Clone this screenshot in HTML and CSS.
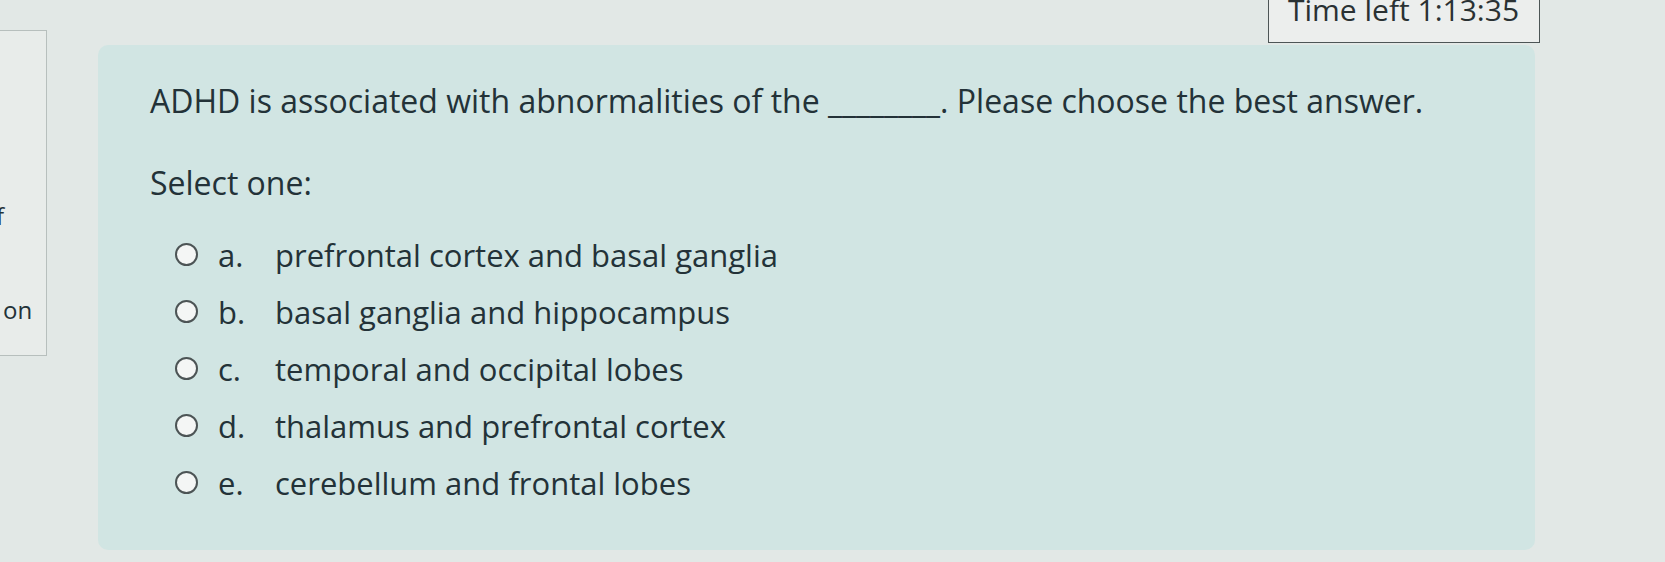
FILE: index.html
```html
<!DOCTYPE html>
<html lang="en">
<head>
    <meta charset="UTF-8">
    <meta name="viewport" content="width=device-width, initial-scale=1.0">
    <title>Quiz</title>
    <link rel="stylesheet" href="styles.css">
</head>
<body>
    <div class="page">
        <div class="sidebar">
            <span class="side-f">f</span>
            <span class="side-on">on</span>
        </div>
        <div class="main">
            <div class="timer-row">
                <div class="timer">Time left 1:13:35</div>
            </div>
            <div class="question">
                <p class="qtext">ADHD is associated with abnormalities of the ________. Please choose the best answer.</p>
                <p class="prompt">Select one:</p>
                <ul class="answers">
                    <li><span class="radio"></span><span class="letter">a.</span><span class="label">prefrontal cortex and basal ganglia</span></li>
                    <li><span class="radio"></span><span class="letter">b.</span><span class="label">basal ganglia and hippocampus</span></li>
                    <li><span class="radio"></span><span class="letter">c.</span><span class="label">temporal and occipital lobes</span></li>
                    <li><span class="radio"></span><span class="letter">d.</span><span class="label">thalamus and prefrontal cortex</span></li>
                    <li><span class="radio"></span><span class="letter">e.</span><span class="label">cerebellum and frontal lobes</span></li>
                </ul>
            </div>
        </div>
    </div>
</body>
</html>
```

FILE: styles.css
```css
*{
    margin: 0;
    padding: 0;
    box-sizing: border-box;
}
body{
    background: #e2e8e6;
    color: #233238;
    font-family: "Open Sans", "Noto Sans", sans-serif;
    overflow: hidden;
}
.page{
    display: grid;
    grid-template-columns: 47px 1fr;
    height: 562px;
}
.sidebar{
    margin-top: 30px;
    height: 326px;
    border: 1px solid #b7bfbd;
    border-left: none;
    background: #e8ecea;
    display: flex;
    flex-direction: column;
    font-size: 24px;
    overflow: hidden;
}
.side-f{
    margin-top: 170px;
    margin-left: -4px;
    line-height: 30px;
}
.side-on{
    margin-top: 64px;
    margin-left: 3px;
    line-height: 30px;
}
.main{
    display: flex;
    flex-direction: column;
    padding-left: 51px;
    padding-right: 130px;
}
.timer-row{
    display: flex;
    justify-content: flex-end;
}
.timer{
    margin-top: -16px;
    margin-right: -5px;
    height: 59px;
    width: 272px;
    border: 1px solid #4d5556;
    background: #eceeed;
    font-size: 30px;
    line-height: 42px;
    padding-left: 19px;
    padding-top: 4px;
    color: #2a3133;
}
.question{
    margin-top: 2px;
    height: 505px;
    background: #d1e5e3;
    border-radius: 10px;
    padding: 35px 0 0 52px;
}
.qtext{
    font-size: 32px;
    line-height: 42px;
}
.prompt{
    margin-top: 40px;
    font-size: 32px;
    line-height: 42px;
}
.answers{
    list-style: none;
    margin-top: 22px;
}
.answers > li{
    display: flex;
    align-items: center;
    height: 57px;
    font-size: 31px;
}
.radio{
    width: 23px;
    height: 23px;
    margin-left: 25px;
    margin-right: 20px;
    border: 2.5px solid #4c5455;
    border-radius: 50%;
    background: #f4f6f5;
}
.letter{
    width: 57px;
}
```
